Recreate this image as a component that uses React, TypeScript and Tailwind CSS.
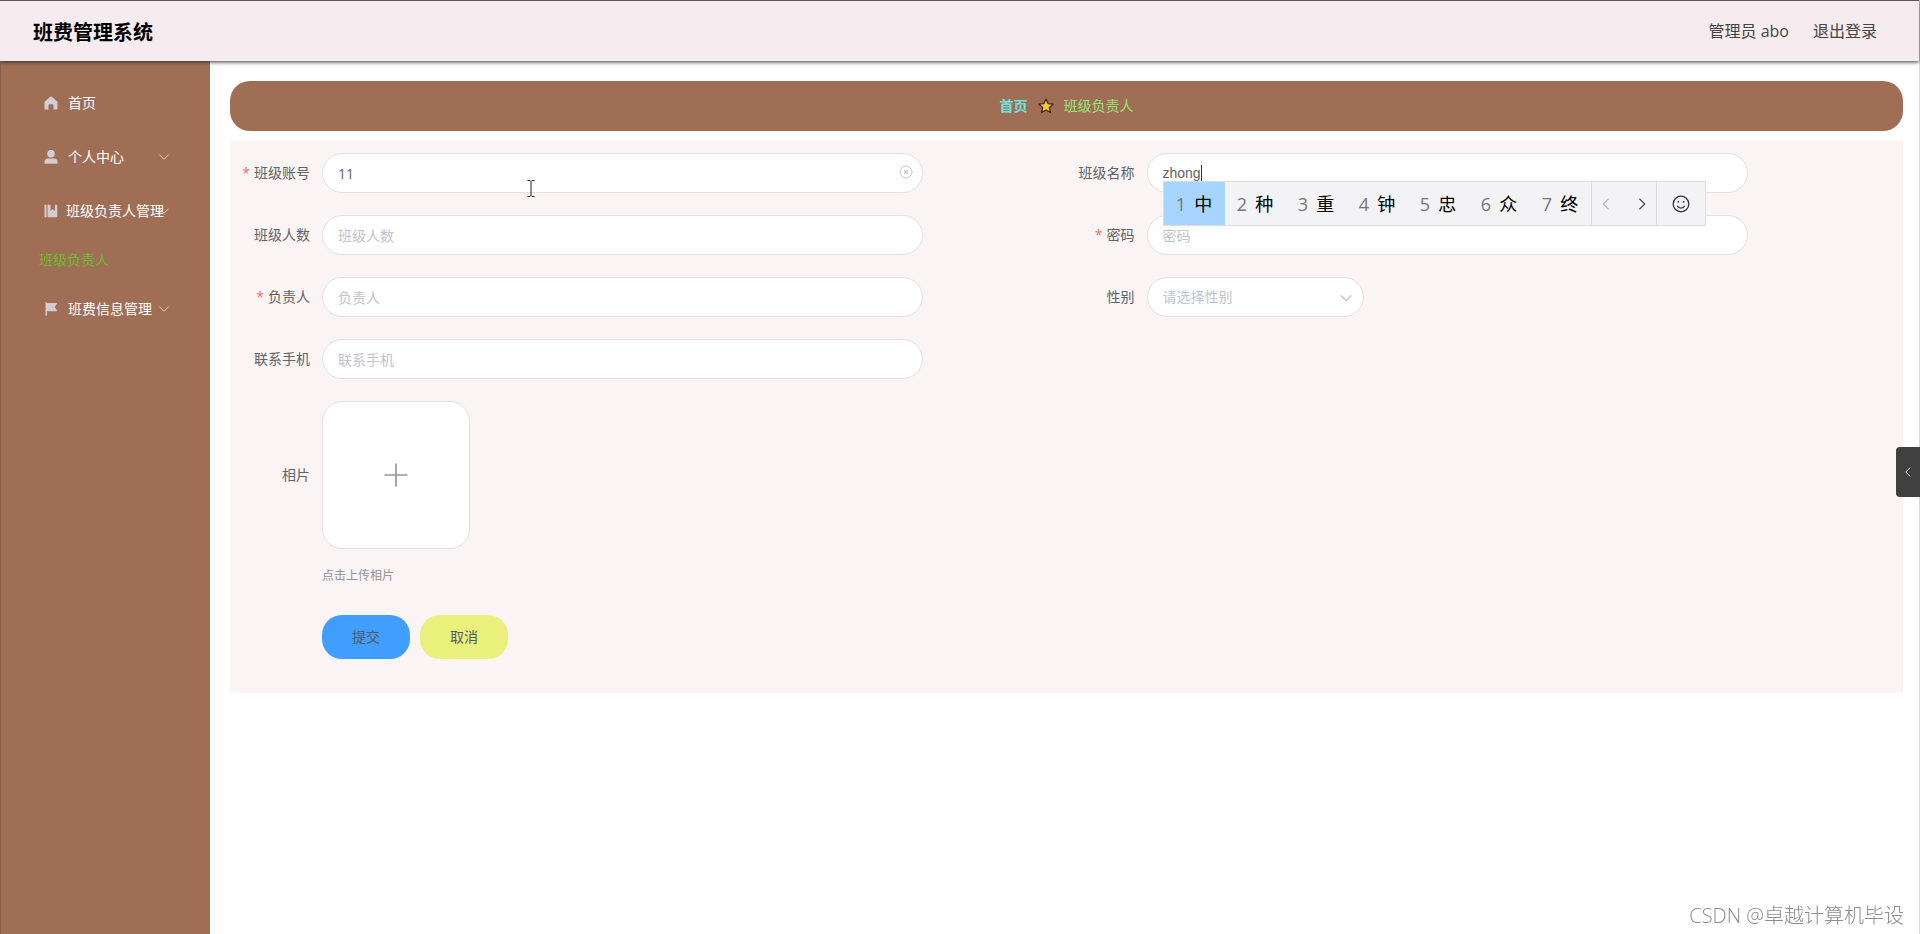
import { useState, type ReactNode } from "react";

const candidates = ["中", "种", "重", "钟", "忠", "众", "终"];

function Chevron({ className }: { className: string }) {
  return (
    <svg viewBox="0 0 12 12" className={className} fill="none" stroke="currentColor" strokeWidth="1">
      <path d="M1.5 3.8 6 8.3l4.5-4.5" />
    </svg>
  );
}

function HomeIcon() {
  return (
    <svg viewBox="0 0 14 14" className="h-3.5 w-3.5" fill="currentColor">
      <path d="M7 .5c-.3 0-.6.1-.8.3L.9 5.400c-.3.2-.4.5-.4.9v6.200c0 .6.4 1 1 1h3V9.500c0-.7.500-1.200 1.200-1.200h2.600c.7 0 1.200.5 1.200 1.200v4h3c.6 0 1-.4 1-1V6.300c0-.4-.1-.7-.4-.9L7.800.8C7.600.6 7.300.5 7 .5Z" />
    </svg>
  );
}

function UserIcon() {
  return (
    <svg viewBox="0 0 14 14" className="h-3.5 w-3.5" fill="currentColor">
      <circle cx="7" cy="3.8" r="3.8" />
      <path d="M.5 13.8v-2c0-2 1.200-3.400 3.200-3.400h6.600c2 0 3.200 1.400 3.200 3.400v2Z" />
    </svg>
  );
}

function NotebookIcon() {
  return (
    <svg viewBox="0 0 14 14" className="h-3.5 w-3.5" fill="currentColor">
      <path d="M.5.8h2v12.400h-2ZM3.500.8h3v6.200l2.200-2 2.200 2V.8h1.500c.6 0 .9.3.9.9v10.600c0 .6-.3.900-.9.900H3.500Z" />
    </svg>
  );
}

function FlagIcon() {
  return (
    <svg viewBox="0 0 14 14" className="h-3.5 w-3.5" fill="currentColor">
      <path d="M1.500.3H3v13.500H1.500ZM3 1h10.200l-2.400 4 2.400 4.200H3Z" />
    </svg>
  );
}

function MenuItem({ icon, text, arrow = true, tight }: { icon: ReactNode; text: string; arrow?: boolean; tight?: boolean }) {
  return (
    <a href="#" className={`relative flex h-[54px] items-center pl-[43px] whitespace-nowrap text-white ${tight ? "gap-2" : "gap-2.5"}`}>
      <span className="text-[#d3cdd3]">{icon}</span>
      {text}
      {arrow && <Chevron className="absolute right-10 h-3 w-3 text-[#dccfc9]" />}
    </a>
  );
}

function Field({ id, label, required, children }: { id: string; label: string; required?: boolean; children: ReactNode }) {
  return (
    <div className="flex items-center">
      <label htmlFor={id} className="w-20 shrink-0 pr-3 text-right whitespace-nowrap text-[#606266]">
        {required && <span className="mr-1 text-[#f56c6c]">*</span>}
        {label}
      </label>
      <div className="relative w-full max-w-[601px]">{children}</div>
    </div>
  );
}

const inputStyle =
  "h-10 w-full rounded-[20px] border border-[#e3dfe7] bg-white px-[15px] text-[#606266] outline-none placeholder:text-[#c0c4cc]";

export default function App() {
  const [account, setAccount] = useState("11");
  const [name, setName] = useState("zhong");

  return (
    <div className="flex min-h-screen flex-col border-r border-[#d9d9d9] bg-white font-['Open_Sans','Noto_Sans_CJK_SC',sans-serif] text-sm">
      <header className="relative z-10 flex h-[61px] items-center justify-between border-t border-[#5f5258] bg-[#f6ecef] pr-[42px] pl-[33px] shadow-[0_1px_4px_#333]">
        <h1 className="pt-1 text-xl font-bold text-black">班费管理系统</h1>
        <div className="flex gap-6 text-base text-[#444]">
          <span>管理员 abo</span>
          <button>退出登录</button>
        </div>
      </header>

      <div className="flex flex-1">
        <nav className="w-[210px] shrink-0 border-l border-[#8b5f49] bg-[#9f6e55] pt-[15px]">
          <MenuItem icon={<HomeIcon />} text="首页" arrow={false} />
          <MenuItem icon={<UserIcon />} text="个人中心" />
          <MenuItem icon={<NotebookIcon />} text="班级负责人管理" tight />
          <a href="#" className="flex h-11 items-center pl-[38px] text-[#6fba2c]">班级负责人</a>
          <MenuItem icon={<FlagIcon />} text="班费信息管理" />
        </nav>

        <main className="min-w-0 flex-1 py-5 pr-4 pl-5">
          <div className="flex h-[50px] items-center justify-center gap-2.5 rounded-[20px] bg-[#9f6e55]">
            <a href="#" className="font-bold text-[#6fe3e3]">首页</a>
            <svg viewBox="0 0 16 16" className="h-4 w-4" fill="#fdc82f" stroke="#3b2417" strokeWidth="1.2" strokeLinejoin="round">
              <path d="m8 .9 2 4.700 5.200.5-3.900 3.400 1.200 5.100L8 11.900l-4.500 2.700 1.200-5.100L.8 6.100l5.200-.5Z" />
            </svg>
            <span className="text-[#97e37c]">班级负责人</span>
          </div>

          <form className="mt-2.5 bg-[#faf4f4] px-3 pt-3 pb-[34px]" onSubmit={(e) => e.preventDefault()}>
            <div className="grid grid-cols-2 gap-y-[22px]">
              <Field id="account" label="班级账号" required>
                <input id="account" className={inputStyle} value={account} onChange={(e) => setAccount(e.target.value)} />
                <button type="button" aria-label="清空" className="absolute top-3 right-2.5" onClick={() => setAccount("")}>
                  <svg viewBox="0 0 14 14" className="h-3.5 w-3.5" fill="none" stroke="#c0c4cc">
                    <circle cx="7" cy="7" r="6" />
                    <path d="m5.200 5.200 3.600 3.600m0-3.600L5.200 8.800" strokeWidth="1.300" />
                  </svg>
                </button>
                <svg viewBox="0 0 8 17" className="absolute top-[27px] left-[205px] h-[17px] w-2" fill="none" stroke="#222">
                  <path d="M.5.500h2.500l1 1 1-1h2.500M4 1.500v14M.5 16.500h2.500l1-1 1 1h2.500" />
                </svg>
              </Field>

              <Field id="name" label="班级名称">
                <input id="name" className={`${inputStyle} font-['Liberation_Sans']`} value={name} onChange={(e) => setName(e.target.value)} />
                <span className="absolute top-3 left-4 h-4 w-[39px] border-r border-[#333]" />
                <div className="absolute top-7 left-4 z-10 flex h-[45px] border border-[#dcdcde] bg-[#f3f3f5] text-lg whitespace-nowrap text-black">
                  {candidates.map((word, i) => (
                    <button
                      type="button"
                      key={word}
                      className={`flex w-[61px] items-center justify-center gap-2 ${i === 0 ? "bg-[#a6d6ff]" : ""}`}
                    >
                      <span className="text-[#76767a]">{i + 1}</span>
                      {word}
                    </button>
                  ))}
                  <div className="flex w-[66px] items-center justify-between border-x border-[#dcdcde] px-[7px]">
                    <button type="button" aria-label="上一页">
                      <Chevron className="h-3.5 w-3.5 rotate-90 text-[#b4b4b6]" />
                    </button>
                    <button type="button" aria-label="下一页">
                      <Chevron className="h-3.5 w-3.5 -rotate-90 text-[#444]" />
                    </button>
                  </div>
                  <button type="button" aria-label="表情" className="flex w-12 items-center justify-center">
                    <svg viewBox="0 0 18 18" className="h-[18px] w-[18px]" fill="none" stroke="#333" strokeWidth="1.300">
                      <circle cx="9" cy="9" r="7.800" />
                      <path d="M5.300 10.800c.7 1.500 2 2.300 3.700 2.300s3-.8 3.700-2.300" />
                      <circle cx="6.300" cy="6.800" r=".9" fill="#333" stroke="none" />
                      <circle cx="11.700" cy="6.800" r=".9" fill="#333" stroke="none" />
                    </svg>
                  </button>
                </div>
              </Field>

              <Field id="count" label="班级人数">
                <input id="count" className={inputStyle} placeholder="班级人数" />
              </Field>
              <Field id="password" label="密码" required>
                <input id="password" type="password" className={inputStyle} placeholder="密码" />
              </Field>
              <Field id="leader" label="负责人" required>
                <input id="leader" className={inputStyle} placeholder="负责人" />
              </Field>
              <Field id="sex" label="性别">
                <div className="relative w-[217px]">
                  <select id="sex" className="h-10 w-full appearance-none rounded-[20px] border border-[#e3dfe7] bg-white px-[15px] text-[#c0c4cc] outline-none">
                    <option value="">请选择性别</option>
                    <option>男</option>
                    <option>女</option>
                  </select>
                  <Chevron className="pointer-events-none absolute top-3.5 right-[11px] h-3.5 w-3.5 text-[#b4b8c0]" />
                </div>
              </Field>
              <Field id="phone" label="联系手机">
                <input id="phone" className={inputStyle} placeholder="联系手机" />
              </Field>
              <div />
              <Field id="photo" label="相片">
                <button id="photo" type="button" className="flex h-[148px] w-[148px] items-center justify-center rounded-[20px] border border-[#e3dfe7] bg-white">
                  <svg viewBox="0 0 24 24" className="h-6 w-6" fill="none" stroke="#96969f" strokeWidth="1.700">
                    <path d="M12 .5v23M.5 12h23" />
                  </svg>
                </button>
              </Field>
            </div>

            <p className="mt-[17px] ml-20 text-xs leading-5 text-[#8f939b]">点击上传相片</p>
            <div className="mt-[29px] ml-20 flex gap-2.5 text-[#4f5a69]">
              <button className="h-11 w-[88px] rounded-[20px] bg-[#409eff]">提交</button>
              <button type="button" className="h-11 w-[88px] rounded-[20px] bg-[#e9f17c]">取消</button>
            </div>
          </form>
        </main>
      </div>

      <button aria-label="展开" className="fixed top-[447px] right-0 z-20 flex h-[50px] w-6 items-center justify-center rounded-l-sm bg-[#404040] text-[#ddd]">
        <Chevron className="h-3 w-3 rotate-90" />
      </button>
      <div className="fixed right-4 bottom-1 text-xl font-light text-[#8c8c8c]">CSDN @卓越计算机毕设</div>
    </div>
  );
}
